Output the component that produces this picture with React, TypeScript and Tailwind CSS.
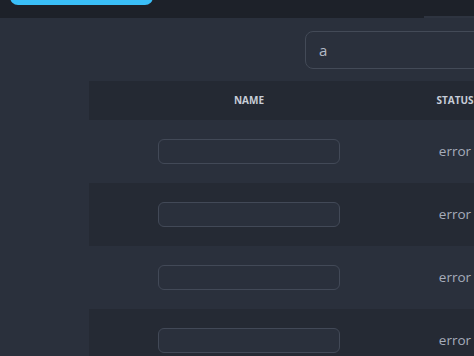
const rows = ["error", "error", "error", "error"];

export default function App() {
  return (
    <div
      className="h-[356px] w-[474px] overflow-hidden bg-[#2a303c] text-[#a6adbb]"
      style={{ fontFamily: '"Open Sans", "Noto Sans", sans-serif' }}
    >
      {/* top bar, scrolled mostly out of view */}
      <div className="relative h-[18px] bg-[#1d2129]">
        <div className="absolute -top-[30px] left-[10px] h-[35px] w-[143px] rounded-lg bg-[#3abff8]" />
        <div className="absolute bottom-0 right-0 h-[2px] w-[50px] bg-[#2e3440]" />
      </div>

      {/* search */}
      <div className="mt-[13px] flex">
        <div className="ml-[305px] flex h-[38px] w-[240px] shrink-0 items-center rounded-lg border border-[#434a57] bg-[#2a303c] px-[13px] text-[15px] text-[#b4bac6]">
          a
        </div>
      </div>

      {/* table */}
      <div className="ml-[89px] mt-[12px] w-[412px] shrink-0">
        <div className="grid h-[39px] grid-cols-[320px_92px] items-center bg-[#242933] text-[10px] font-bold uppercase text-[#c7cdd8]">
          <div className="text-center">Name</div>
          <div className="text-center">Status</div>
        </div>
        {rows.map((status, i) => (
          <div
            key={i}
            className={`grid h-[63px] grid-cols-[320px_92px] items-center ${
              i % 2 ? "bg-[#252a34]" : "bg-[#2a303c]"
            }`}
          >
            <div className="flex justify-center">
              <div className="h-[25px] w-[182px] rounded-md border border-[#424957] bg-[#2a303c]" />
            </div>
            <div className="text-center text-[13.5px] text-[#a6adbb]">{status}</div>
          </div>
        ))}
      </div>
    </div>
  );
}
